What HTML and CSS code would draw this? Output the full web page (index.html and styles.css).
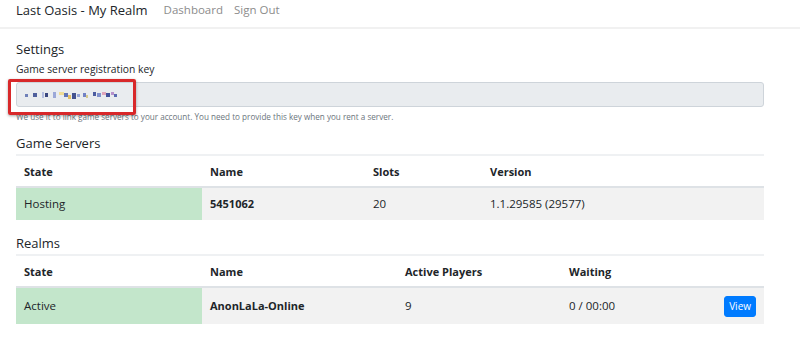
FILE: index.html
```html
<!DOCTYPE html>
<html lang="en">
<head>
    <meta charset="UTF-8">
    <meta name="viewport" content="width=device-width, initial-scale=1.0">
    <title>Last Oasis - My Realm</title>
    <link rel="stylesheet" href="styles.css">
</head>
<body>
    <nav class="navbar">
        <span class="brand">Last Oasis - My Realm</span>
        <a class="nav-link" href="#">Dashboard</a>
        <a class="nav-link" href="#">Sign Out</a>
    </nav>

    <div class="container">
        <h5 class="section-title">Settings</h5>

        <div class="form-group">
            <label for="regkey">Game server registration key</label>
            <div class="key-wrap">
                <div class="key-input" id="regkey">
                    <svg class="key-blur" width="96" height="8" viewBox="0 0 96 8">
                        <rect x="0" y="3" width="3" height="3" fill="#6f80b8"/>
                        <rect x="8" y="2" width="4" height="4" fill="#4f5f9c"/>
                        <rect x="17" y="1" width="2" height="6" fill="#b3bde0"/>
                        <rect x="20" y="2" width="3" height="4" fill="#3b4780"/>
                        <rect x="28" y="1" width="3" height="6" fill="#9ba8d8"/>
                        <rect x="34" y="1" width="5" height="3" fill="#f0dc96"/>
                        <rect x="39" y="2" width="4" height="4" fill="#6274b8"/>
                        <rect x="43" y="4" width="3" height="4" fill="#e5c066"/>
                        <rect x="47" y="2" width="4" height="6" fill="#44528f"/>
                        <rect x="52" y="3" width="3" height="3" fill="#95a3d6"/>
                        <rect x="58" y="2" width="3" height="4" fill="#7282c4"/>
                        <rect x="61" y="4" width="2" height="3" fill="#d6c98c"/>
                        <rect x="68" y="1" width="3" height="4" fill="#4c5ca0"/>
                        <rect x="72" y="2" width="4" height="4" fill="#8191cc"/>
                        <rect x="77" y="1" width="4" height="3" fill="#e0a6bc"/>
                        <rect x="81" y="2" width="4" height="4" fill="#41519a"/>
                        <rect x="86" y="1" width="3" height="3" fill="#b892cc"/>
                        <rect x="89" y="3" width="3" height="3" fill="#5a6bb0"/>
                    </svg>
                </div>
                <div class="highlight-box"></div>
            </div>
            <small class="help-text">We use it to link game servers to your account. You need to provide this key when you rent a server.</small>
        </div>

        <h5 class="section-title">Game Servers</h5>
        <table class="table servers">
            <thead>
                <tr>
                    <th class="col-state">State</th>
                    <th class="col-name">Name</th>
                    <th class="col-slots">Slots</th>
                    <th>Version</th>
                </tr>
            </thead>
            <tbody>
                <tr>
                    <td class="state-ok">Hosting</td>
                    <td class="strong">5451062</td>
                    <td>20</td>
                    <td>1.1.29585 (29577)</td>
                </tr>
            </tbody>
        </table>

        <h5 class="section-title">Realms</h5>
        <table class="table realms">
            <thead>
                <tr>
                    <th class="col-state">State</th>
                    <th class="col-rname">Name</th>
                    <th class="col-players">Active Players</th>
                    <th>Waiting</th>
                    <th class="col-action"></th>
                </tr>
            </thead>
            <tbody>
                <tr>
                    <td class="state-ok">Active</td>
                    <td class="strong">AnonLaLa-Online</td>
                    <td>9</td>
                    <td>0 / 00:00</td>
                    <td class="action"><button class="btn">View</button></td>
                </tr>
            </tbody>
        </table>
    </div>
</body>
</html>
```

FILE: styles.css
```css
body {
    font-family: "Open Sans", "Noto Sans", sans-serif;
    font-size: 11.5px;
    line-height: 18px;
    margin: 0;
    color: #212529;
    background-color: #fff;
}

.navbar {
    display: flex;
    align-items: center;
    height: 27px;
    padding: 0 16px;
    border-bottom: 2px solid #f1f1f1;
}

.brand {
    font-size: 13px;
    margin-right: 16px;
    padding-bottom: 8px;
}

.nav-link {
    color: #8c8c8c;
    text-decoration: none;
    font-size: 11.5px;
    margin-right: 11px;
    padding-bottom: 8px;
}

.container {
    padding: 11px 36px 0 16px;
}

.section-title {
    font-size: 13px;
    font-weight: 500;
    line-height: 18px;
    margin: 0 0 2px;
}

.form-group {
    margin-bottom: 10px;
}

label {
    display: block;
    font-size: 10.3px;
    margin-bottom: 4px;
}

.key-wrap {
    position: relative;
}

.key-input {
    height: 23px;
    background-color: #e9ecef;
    border: 1px solid #ced4da;
    border-radius: 3px;
    display: flex;
    align-items: center;
    padding-left: 8px;
}

.highlight-box {
    position: absolute;
    left: -8px;
    top: -3px;
    width: 122px;
    height: 30px;
    border: 3px solid #d8282a;
    border-radius: 2px;
    box-shadow: 0 1px 3px rgba(0, 0, 0, 0.35);
}

.help-text {
    display: block;
    font-size: 8.15px;
    line-height: 14px;
    color: #6c757d;
    margin-top: 3px;
}

.table {
    width: 100%;
    border-collapse: collapse;
    table-layout: fixed;
    margin-bottom: 14px;
}

.table th,
.table td {
    text-align: left;
    padding: 7px 8px;
    vertical-align: middle;
    line-height: 18px;
}

.table thead th {
    font-size: 11px;
    font-weight: 700;
    padding-top: 7px;
    padding-bottom: 5px;
    border-top: 2px solid #eff1f3;
    border-bottom: 2px solid #dee2e6;
}

.table tbody td {
    background-color: #f2f2f2;
}

.table tbody td.state-ok {
    background-color: #c3e6cb;
}

.strong {
    font-size: 11px;
    font-weight: 700;
}

.col-state { width: 170px; }
.col-name { width: 147px; }
.col-slots { width: 101px; }
.col-rname { width: 179px; }
.col-players { width: 148px; }
.col-action { width: 44px; }

.realms tbody td.action {
    text-align: right;
    line-height: 21px;
}

.btn {
    font-family: inherit;
    font-size: 10px;
    line-height: 15px;
    height: 21px;
    vertical-align: middle;
    color: #fff;
    background-color: #007bff;
    border: 1px solid #007bff;
    border-radius: 3px;
    padding: 2px 4px;
    cursor: pointer;
}
```
